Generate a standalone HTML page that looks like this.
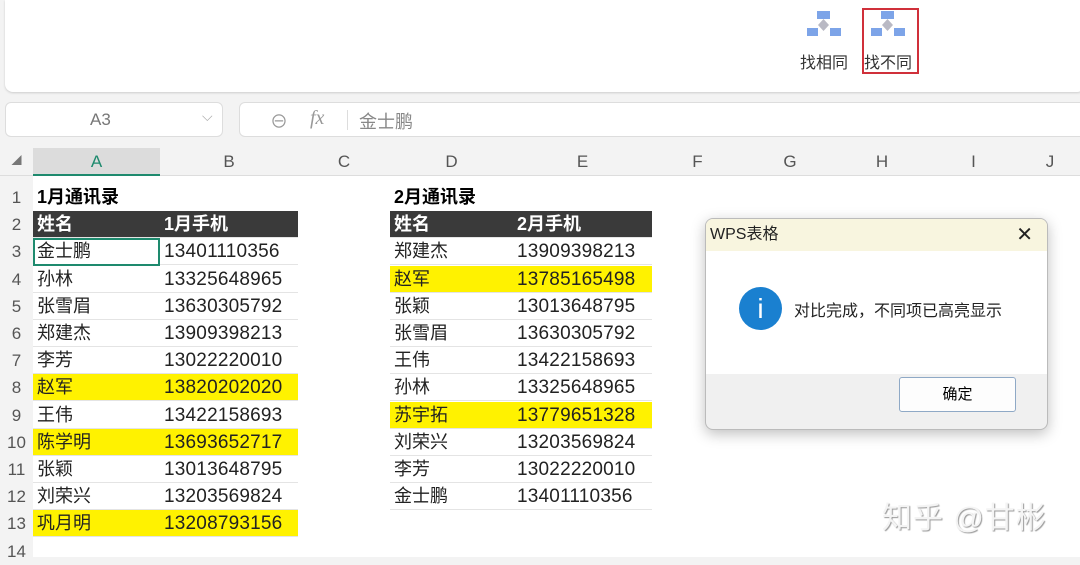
<!DOCTYPE html><html><head><meta charset="utf-8"><style>
*{margin:0;padding:0;box-sizing:border-box}
body{width:1080px;height:557px;overflow:hidden;background:#f3f3f3;font-family:"Liberation Sans","Noto Sans CJK SC",sans-serif;position:relative}
.a{position:absolute}
.ribbon{left:5px;top:0;width:1080px;height:92px;background:#fff;border-radius:0 0 8px 8px;box-shadow:0 1px 2px #ccc}
.box{background:#fff;border:1px solid #ddd;border-radius:6px}
.grid{left:0;top:148px;width:1080px;height:409px;background:#fff}
.ch{top:148px;height:28px;background:#f3f3f3;color:#555;font-size:17px;text-align:center;line-height:28px;border-bottom:1px solid #ddd}
.rh{left:0;width:33px;background:#f3f3f3;color:#555;font-size:17px;text-align:center}
.c{font-size:18px;line-height:27px;height:27px;padding-left:4px;color:#222;white-space:nowrap;border-bottom:1px solid #e4e4e4}
.n{font-size:19px;letter-spacing:0.2px}
.h{background:#3a3a3a;color:#fff;font-weight:bold}
.y{background:#fff200}
.t{font-weight:bold;font-size:18px;line-height:27px;padding-left:4px}
</style></head><body>
<div class="a ribbon"></div>
<svg class="a" style="left:806px;top:10px" width="36" height="30"><rect x="11" y="1" width="13" height="8" fill="#7da4e8"/><polygon points="17.5,9 23,15 17.5,21 12,15" fill="#b9b9c4"/><rect x="1" y="18" width="11" height="8" fill="#7da4e8"/><rect x="24" y="18" width="11" height="8" fill="#7da4e8"/></svg>
<div class="a" style="left:800px;top:49px;font-size:16px;color:#333">找相同</div>
<div class="a" style="left:862px;top:8px;width:57px;height:66px;border:2px solid #d0303a"></div>
<svg class="a" style="left:870px;top:10px" width="36" height="30"><rect x="11" y="1" width="13" height="8" fill="#7da4e8"/><polygon points="17.5,9 23,15 17.5,21 12,15" fill="#b9b9c4"/><rect x="1" y="18" width="11" height="8" fill="#7da4e8"/><rect x="24" y="18" width="11" height="8" fill="#7da4e8"/></svg>
<div class="a" style="left:864px;top:49px;font-size:16px;color:#333">找不同</div>
<div class="a box" style="left:5px;top:102px;width:218px;height:35px"></div>
<div class="a" style="left:90px;top:110px;font-size:17px;color:#777">A3</div>
<div class="a" style="left:202px;top:108px;font-size:14px;color:#aaa">⌵</div>
<div class="a box" style="left:239px;top:102px;width:850px;height:35px"></div>
<div class="a" style="left:270px;top:108px;font-size:18px;color:#999">⊖</div>
<div class="a" style="left:310px;top:107px;font-size:20px;color:#999;font-style:italic;font-family:'Liberation Serif',serif">fx</div>
<div class="a" style="left:347px;top:110px;width:1px;height:20px;background:#ddd"></div>
<div class="a" style="left:359px;top:108px;font-size:18px;color:#888">金士鹏</div>
<div class="a grid"></div>
<div class="a ch" style="left:0;width:33px;font-size:10px;color:#777">◢</div>
<div class="a ch" style="left:33px;width:127px;background:#dcdcdc;color:#1e8a6e;border-bottom:2px solid #1e8a6e">A</div>
<div class="a ch" style="left:160px;width:138px">B</div>
<div class="a ch" style="left:298px;width:92px">C</div>
<div class="a ch" style="left:390px;width:123px">D</div>
<div class="a ch" style="left:513px;width:139px">E</div>
<div class="a ch" style="left:652px;width:91px">F</div>
<div class="a ch" style="left:743px;width:94px">G</div>
<div class="a ch" style="left:837px;width:90px">H</div>
<div class="a ch" style="left:927px;width:93px">I</div>
<div class="a ch" style="left:1020px;width:60px">J</div>
<div class="a" style="left:0;top:176px;width:33px;height:381px;background:#f3f3f3"></div>
<div id="rows"></div>
<div class="a" style="left:705px;top:218px;width:343px;height:212px;background:#f0f0f0;border:1px solid #bbb;border-radius:8px;box-shadow:0 4px 14px rgba(0,0,0,.25);overflow:hidden">
<div style="height:32px;background:#f8f5df;font-size:16px;line-height:32px;padding-left:4px;color:#222">WPS表格<span style="position:absolute;right:14px;top:0;font-size:20px">✕</span></div>
<div style="height:123px;background:#fff;position:relative">
<div class="a" style="left:33px;top:36px;width:43px;height:43px;border-radius:50%;background:#1a80d0;color:#fff;text-align:center;font-size:28px;line-height:43px;font-family:'Liberation Sans'">i</div>
<div class="a" style="left:88px;top:46px;font-size:16px;color:#222">对比完成，不同项已高亮显示</div></div>
<div class="a" style="left:193px;top:158px;width:117px;height:35px;background:#fdfdfd;border:1px solid #8fa9c6;border-radius:3px;text-align:center;line-height:33px;font-size:15px">确定</div>
</div>
<div class="a" style="left:882px;top:493px;font-size:30px;color:#f4f4f4;text-shadow:1px 1px 1px #999;letter-spacing:1px">知乎 @甘彬</div>
<script>
var T=184,H=27.2,o='';
for(var r=1;r<=14;r++){o+='<div class="a rh" style="top:'+(T+(r-1)*H)+'px;height:'+H+'px;line-height:'+H+'px">'+r+'</div>';}
function cell(x,w,r,t,cls){o+='<div class="a c '+(cls||'')+'" style="left:'+x+'px;width:'+w+'px;top:'+(T+(r-1)*H)+'px">'+t+'</div>';}
o+='<div class="a t" style="left:33px;top:'+T+'px">1月通讯录</div><div class="a t" style="left:390px;top:'+T+'px">2月通讯录</div>';
var L=[['金士鹏','13401110356'],['孙林','13325648965'],['张雪眉','13630305792'],['郑建杰','13909398213'],['李芳','13022220010'],['赵军','13820202020',1],['王伟','13422158693'],['陈学明','13693652717',1],['张颖','13013648795'],['刘荣兴','13203569824'],['巩月明','13208793156',1]];
var R=[['郑建杰','13909398213'],['赵军','13785165498',1],['张颖','13013648795'],['张雪眉','13630305792'],['王伟','13422158693'],['孙林','13325648965'],['苏宇拓','13779651328',1],['刘荣兴','13203569824'],['李芳','13022220010'],['金士鹏','13401110356']];
cell(33,127,2,'姓名','h');cell(160,138,2,'1月手机','h');cell(390,123,2,'姓名','h');cell(513,139,2,'2月手机','h');
L.forEach(function(d,i){cell(33,127,i+3,d[0],d[2]?'y':'');cell(160,138,i+3,d[1],'n '+(d[2]?'y':''));});
R.forEach(function(d,i){cell(390,123,i+3,d[0],d[2]?'y':'');cell(513,139,i+3,d[1],'n '+(d[2]?'y':''));});
o+='<div class="a" style="left:33px;top:'+(T+2*H)+'px;width:127px;height:'+H+'px;border:2px solid #1e8a6e"></div>';
document.getElementById('rows').outerHTML=o;
</script>
</body></html>
